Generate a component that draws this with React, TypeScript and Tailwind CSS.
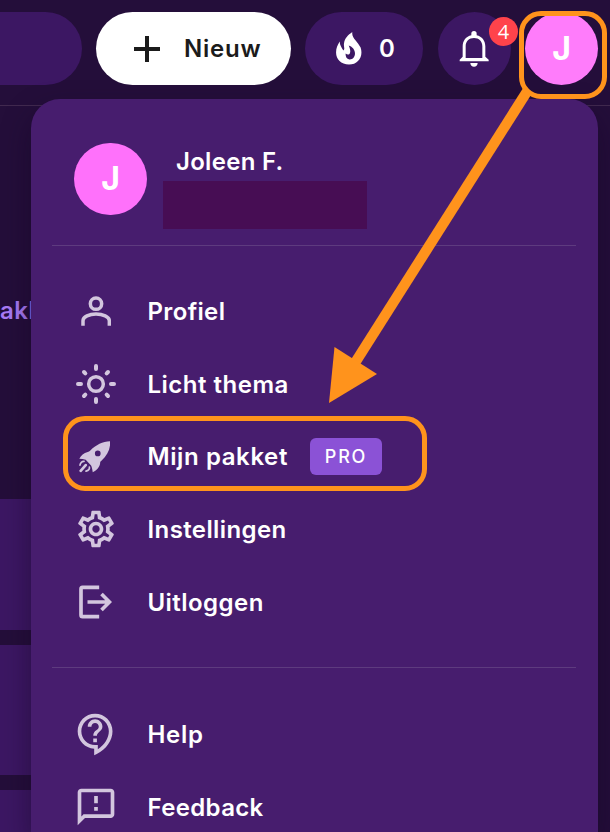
import type { ReactNode } from "react";
import { MdOutlineContactSupport, MdOutlineFeedback, MdOutlineSettings } from "react-icons/md";

function FlameIcon() {
  return (
    <svg viewBox="108 95 78 98" className="h-[32.5px] w-[26px]" fill="none">
      <path
        fill="white"
        fillRule="evenodd"
        d="M157 95C154 113 174 124 182 142C191 168 175 193 147 193C123 193 108 177 108 157C108 143 113 134 119 124C119 134 124 142 130 151C136 145 130 139 132 129C134 114 144 104 157 95ZM146 136C150 145 152 151 150 158C148 164 142 164 137 160C136 167 139 176 148 178C158 179 165 170 165 160C165 148 156 139 146 136Z"
      />
    </svg>
  );
}

function BellIcon() {
  return (
    <svg viewBox="478 90 90 108" className="h-9 w-[30px]" fill="none">
      <path
        fill="white"
        fillRule="evenodd"
        d="M515 103V98A8 8 0 0 1 531 98V103C547 107 557 119 557 136V167L567 176V181H480V176L489 167V136C489 119 499 107 515 103ZM498 171H548V136C548 121 538 111 523 111S498 121 498 136Z"
      />
      <path fill="white" d="M512 186H534C534 193 529 197 523 197S512 193 512 186Z" />
    </svg>
  );
}

function ProfileIcon() {
  return (
    <svg viewBox="63 48 90 90" className="size-[30px]" fill="none" stroke="currentColor" strokeWidth="10.5">
      <circle cx="108" cy="71" r="17" />
      <path d="M69 137V122C69 110 88 102 108 102S148 110 148 122V137" />
    </svg>
  );
}

function SunIcon() {
  return (
    <svg
      viewBox="0 0 120 120"
      className="size-10"
      fill="none"
      stroke="currentColor"
      strokeWidth="12"
      strokeLinecap="round"
    >
      <circle cx="60" cy="60" r="22" strokeWidth="10.5" />
      <path d="M60 6V15M60 105V114M6 60H15M105 60H114M24 24L28 28M92 92L96 96M24 96L28 92M92 28L96 24" />
    </svg>
  );
}

function RocketIcon() {
  return (
    <svg viewBox="57 50 94 94" className="mr-[3px] size-[31.500px]" fill="none">
      <path
        fill="currentColor"
        fillRule="evenodd"
        d="M150 51C151 73 142 92 124 109C121 111 120 113 120 117C118 129 109 138 98 143C97 136 96 129 93 123L77 106C71 104 65 103 58 103C63 93 71 86 83 83C86 82 88 81 90 79C108 61 128 52 150 51ZM121.500 87A8.500 8.500 0 1 0 104.500 87A8.500 8.500 0 1 0 121.500 87Z"
      />
      <path
        stroke="currentColor"
        strokeWidth="5"
        strokeLinecap="round"
        d="M60 122C61 115 66 110 72 111M78 140C85 138 89 133 88 128"
      />
      <path stroke="currentColor" strokeWidth="8" strokeLinecap="round" d="M62 139L77 122" />
    </svg>
  );
}

function LogoutIcon() {
  return (
    <svg
      viewBox="59 255 98 102"
      className="mr-0.5 mb-0.5 h-[34px] w-[33px]"
      fill="none"
      stroke="currentColor"
      strokeWidth="11"
    >
      <path d="M119 262H69Q64.500 262 64.500 267V345Q64.500 350 69 350H119" />
      <path d="M84 306H149M126 282L150 306L126 330" />
    </svg>
  );
}

type Item = { label: string; icon: ReactNode; tracking: string; badge?: string };

const ACCOUNT_ITEMS: Item[] = [
  { label: "Profiel", icon: <ProfileIcon />, tracking: "tracking-[0.35px]" },
  { label: "Licht thema", icon: <SunIcon />, tracking: "tracking-[0.5px]" },
  { label: "Mijn pakket", icon: <RocketIcon />, tracking: "tracking-[0.6px]", badge: "PRO" },
  { label: "Instellingen", icon: <MdOutlineSettings className="mb-0.5 size-[44px]" />, tracking: "tracking-[0.4px]" },
  { label: "Uitloggen", icon: <LogoutIcon />, tracking: "tracking-[0.45px]" },
];

const SUPPORT_ITEMS: Item[] = [
  { label: "Help", icon: <MdOutlineContactSupport className="size-[44px]" />, tracking: "tracking-[0.7px]" },
  { label: "Feedback", icon: <MdOutlineFeedback className="size-[44px]" />, tracking: "tracking-[0.35px]" },
];

function MenuItem({ label, icon, tracking, badge }: Item) {
  return (
    <li className="flex h-[72.8px] items-center">
      <span className="flex w-[88px] shrink-0 justify-center text-[#d3c6de]">{icon}</span>
      <span className={`ml-[7.5px] pt-px text-2xl font-semibold whitespace-nowrap ${tracking}`}>{label}</span>
      {badge && (
        <span className="ml-auto mr-[194px] flex h-[37px] w-[72px] items-center justify-center rounded-md bg-[#8b52d6] text-lg font-medium tracking-[1.8px]">
          {badge}
        </span>
      )}
    </li>
  );
}

function Header() {
  return (
    <header className="flex h-[106px] items-start border-b border-[#41294f] pt-3">
      <div className="h-[73px] w-[82px] rounded-r-full bg-[#3c1763]" />
      <button className="ml-3.5 flex h-[73px] w-[195px] items-center rounded-full bg-white pl-[38px] text-[#1b1b1b]">
        <svg viewBox="0 0 26 26" className="size-[26px]" stroke="currentColor" strokeWidth="4">
          <path d="M13 0V26M0 13H26" />
        </svg>
        <span className="ml-6 text-2xl font-semibold tracking-[0.8px]">Nieuw</span>
      </button>
      <div className="ml-3.5 flex h-[73px] w-[118px] items-center rounded-full bg-[#3c1763] pl-[31px]">
        <FlameIcon />
        <span className="ml-[17px] pt-px text-2xl font-semibold">0</span>
      </div>
      <div className="relative ml-[15px] flex size-[73px] items-center justify-center rounded-full bg-[#3c1763] pr-px">
        <BellIcon />
        <span className="absolute top-[5px] left-[51px] flex size-[29px] items-center justify-center rounded-full bg-[#ff434b] font-['Open_Sans',sans-serif] text-xl font-medium">
          4
        </span>
      </div>
      <div className="ml-3.5 flex size-[73px] items-center justify-center rounded-full bg-[#ff7cfb] text-[32px] font-bold">
        J
      </div>
    </header>
  );
}

function AccountMenu() {
  return (
    <div className="absolute top-[99px] left-[31px] h-[733px] w-[567px] overflow-hidden rounded-t-[29px] bg-[#471d6e] pr-[22px] pl-[21px] shadow-[0_14px_28px_rgba(20,5,35,0.5)]">
      <div className="flex h-[147px] items-start border-b border-[#5e3b7f] pt-11 pl-[22px]">
        <div className="flex h-[72px] w-[73px] items-center justify-center rounded-full bg-[#ff71fb] text-[32px] font-bold">
          J
        </div>
        <div className="ml-4">
          <p className="pl-[13px] text-2xl leading-[38px] font-semibold tracking-[0.3px]">Joleen F.</p>
          <div className="h-12 w-[204px] bg-[#470d54]" />
        </div>
      </div>
      <ul className="h-[422px] border-b border-[#5e3b7f] pt-[29px]">
        {ACCOUNT_ITEMS.map((item) => (
          <MenuItem key={item.label} {...item} />
        ))}
      </ul>
      <ul className="pt-[30px]">
        {SUPPORT_ITEMS.map((item) => (
          <MenuItem key={item.label} {...item} />
        ))}
      </ul>
    </div>
  );
}

/* Orange outlines and the arrow from avatar to plan */
function Highlights() {
  return (
    <div className="pointer-events-none absolute inset-0">
      <div className="absolute top-[11px] left-[519px] h-[88px] w-[88px] rounded-[22px] border-5 border-[#ff931c]" />
      <div className="absolute top-[416px] left-[63px] h-[75px] w-[364px] rounded-[22px] border-5 border-[#ff931c]" />
      <svg viewBox="0 0 610 832" className="absolute inset-0 h-full w-full">
        <path d="M528 90L353 366" stroke="#ff931c" strokeWidth="10.4" />
        <path d="M334.500 347L377 374L329 403Z" fill="#ff931c" />
      </svg>
    </div>
  );
}

export default function App() {
  return (
    <div className="relative h-[832px] w-[610px] overflow-hidden bg-[#240e3a] font-['Inter',sans-serif] text-white">
      <Header />
      <main className="w-[560px]">
        <p className="h-[393px] pt-[189px] text-2xl font-semibold tracking-[0.5px] text-[#a87af5]">akket</p>
        <div className="flex flex-col gap-[15px]">
          <div className="h-[131px] bg-[#3c1763]" />
          <div className="h-[130px] bg-[#3c1763]" />
          <div className="h-[130px] bg-[#3c1763]" />
        </div>
      </main>
      <AccountMenu />
      <Highlights />
    </div>
  );
}
